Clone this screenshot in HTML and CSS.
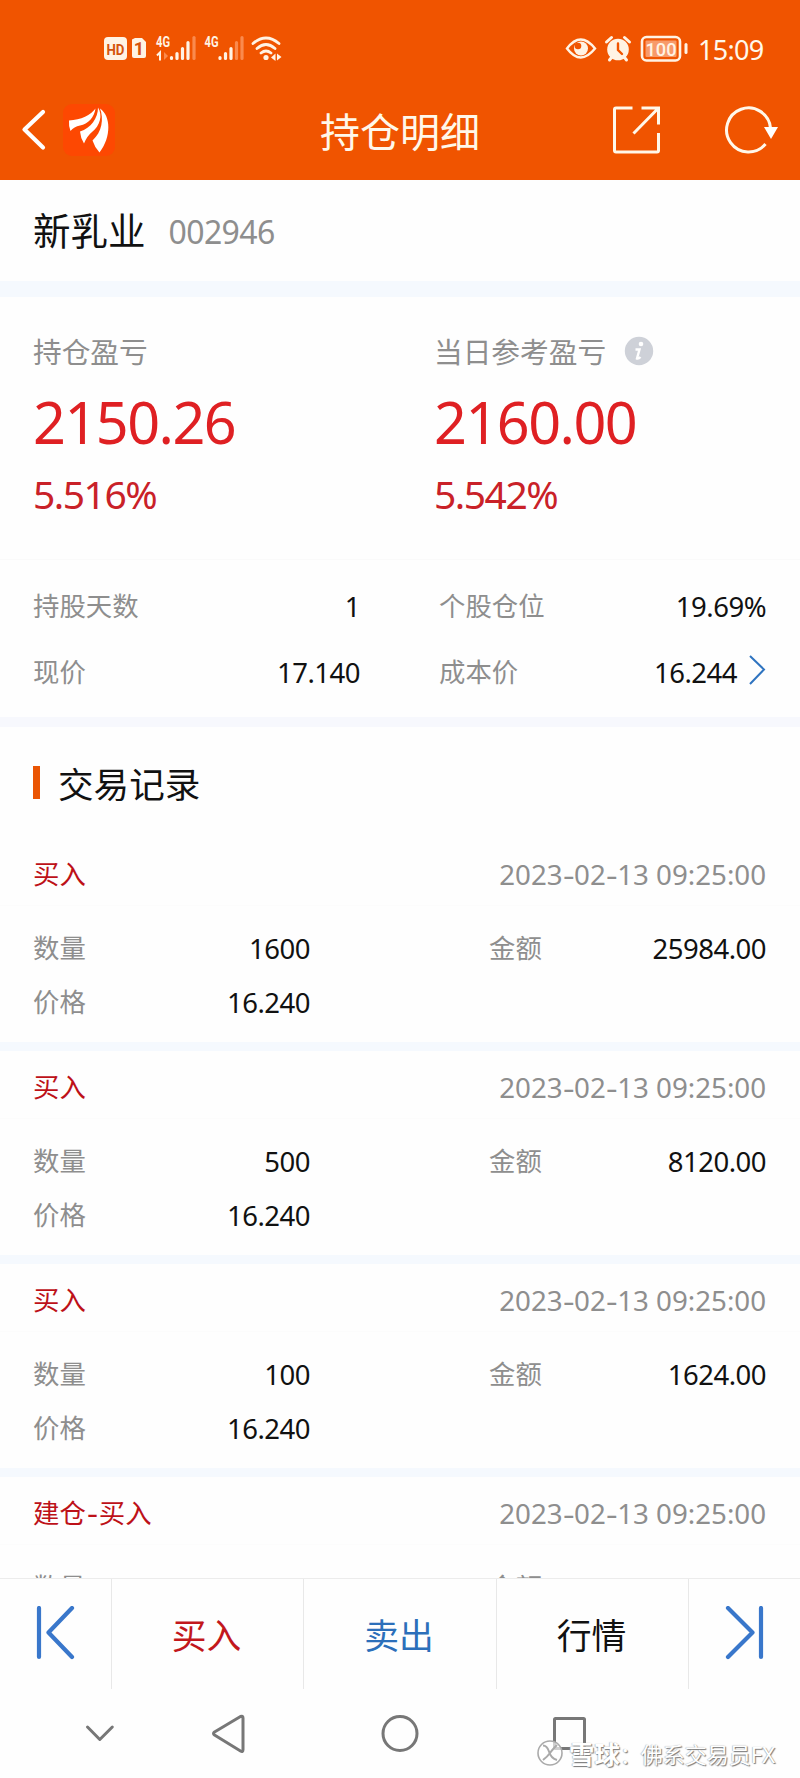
FILE: index.html
```html
<!DOCTYPE html>
<html lang="zh-CN">
<head>
<meta charset="utf-8">
<title>持仓明细</title>
<link rel="stylesheet" href="styles.css">
</head>
<body>
<div class="screen">
  <header class="header">
    <div class="status">
      <svg class="status-left" width="190" height="40" viewBox="100 30 190 40">
        <rect x="104" y="37" width="23" height="23" rx="4" fill="#fff3e4"/>
        <text x="115.500" y="54.500" class="hd" text-anchor="middle" textLength="18" lengthAdjust="spacingAndGlyphs">HD</text>
        <path d="M132 39.500l3-1.500h7l4 4v14q0 2-2 2h-10q-2 0-2-2z" fill="#fff3e4"/>
        <text x="139" y="55" class="sim" text-anchor="middle">1</text>
        <text x="156" y="47" class="net" textLength="14" lengthAdjust="spacingAndGlyphs">4G</text>
        <path d="M157 55.500l3-3v8" fill="none" stroke="#fff3e4" stroke-width="2"/>
        <path d="M164 52v8l4-4z" fill="#fa8a4d"/>
        <path d="M171.500 57.500v1M177 53.500v5M182.500 48.500v10M188 42.500v16" class="bar"/>
        <path d="M194 37.500v21" class="bar faint"/>
        <text x="204.500" y="47" class="net" textLength="14" lengthAdjust="spacingAndGlyphs">4G</text>
        <path d="M220 57.500v1M225.500 53.500v5M231 48.500v10" class="bar"/>
        <path d="M236.500 42.500v16M242 37.500v21" class="bar faint"/>
        <path d="M253 43.500q13-11 26 0M257 48.500q9-8 18 0M261 53q5-4 10 0" fill="none" stroke="#fff3e4" stroke-width="2.800" stroke-linecap="round"/>
        <circle cx="266" cy="57.500" r="2.600" fill="#fff3e4"/>
        <path d="M271 57.500l4.500-4v7.500zM277 53.500v7l4.500-3.500z" fill="#fff3e4"/>
      </svg>
      <svg class="status-right" width="125" height="40" viewBox="564 30 125 40">
        <path d="M567 48.500q13.500-18 28 0q-14.500 18-28 0z" fill="none" stroke="#fff3e4" stroke-width="2.400"/>
        <circle cx="581" cy="48.500" r="7" fill="#fff3e4"/>
        <circle cx="578" cy="46" r="3.300" fill="#f05400"/>
        <circle cx="618" cy="49.500" r="10.800" fill="#fff3e4"/>
        <path d="M606.500 42l5-4.500M629.500 42l-5-4.500M609.500 60l2-2.500M626.500 60l-2-2.500" stroke="#fff3e4" stroke-width="3" stroke-linecap="round"/>
        <path d="M618 43.500v6.500l4 4" fill="none" stroke="#f05400" stroke-width="2.400" stroke-linecap="round"/>
        <rect x="642" y="37" width="38" height="23.500" rx="4.500" fill="none" stroke="#fff3e4" stroke-width="2.600"/>
        <rect x="645.500" y="40.500" width="31" height="16.500" rx="1" fill="#f79a6a"/>
        <text x="661" y="55.500" class="battery" text-anchor="middle" textLength="31" lengthAdjust="spacingAndGlyphs">100</text>
        <path d="M686 44.500v8" stroke="#fff3e4" stroke-width="3" stroke-linecap="round"/>
      </svg>
      <span class="clock">15:09</span>
    </div>
    <div class="titlebar">
      <svg class="back" width="100" height="60" viewBox="20 100 100 60">
        <path d="M43 112L24.500 129.500L43 147.500" fill="none" stroke="#fff" stroke-width="4.200" stroke-linecap="round" stroke-linejoin="round"/>
        <rect x="63" y="104" width="52" height="52" rx="9" fill="#fd4802"/>
        <path d="M69 120.500C81 120 91 115 95.500 108.500C94.500 117 88 124 80 125.500Q74 126.500 70.500 131Q68.500 126 69 120.500z" fill="#fff"/>
        <path d="M98 107.500C103 115 100 126 92 132Q87 136 84 143.500Q80.500 138 80 131.500C91 128 98 118 98 107.500z" fill="#fff"/>
        <path d="M100 108.500C111 116 111.500 137 99.500 152.500Q94.500 147 92.500 140.500C102 132 104 119 100 108.500z" fill="#fff"/>
      </svg>
      <h1 class="title">持仓明细</h1>
      <svg class="actions" width="170" height="60" viewBox="610 100 170 60" fill="none" stroke="#fff8ea" stroke-width="3">
        <path d="M632.500 108H616q-1.500 0-1.500 1.500v41q0 1.500 1.500 1.500h41q1.500 0 1.500-1.500V133M641.500 108h17v16.500M658 108.500L633.500 133.500"/>
        <path d="M765.500 144A22 22 0 1 1 770.500 128"/>
        <path d="M764 127h14l-7 12z" fill="#fff" stroke="none"/>
      </svg>
    </div>
  </header>

  <section class="stock"><span class="name">新乳业</span><span class="code">002946</span></section>

  <section class="profit">
    <div class="profit-cell">
      <div class="label">持仓盈亏</div>
      <div class="amount">2150.26</div>
      <div class="percent">5.516%</div>
    </div>
    <div class="profit-cell">
      <div class="label">当日参考盈亏
        <svg class="info-icon" width="30" height="30" viewBox="0 0 30 30"><circle cx="15" cy="15" r="14.200" fill="#ced1d8"/><circle cx="17" cy="8" r="2.300" fill="#fff"/><path d="M11.500 13.500h4l-2.500 9q1.500.500 3.500-1.500" fill="none" stroke="#fff" stroke-width="2.400"/></svg>
      </div>
      <div class="amount">2160.00</div>
      <div class="percent">5.542%</div>
    </div>
  </section>

  <section class="facts">
    <div class="fact"><span class="key">持股天数</span><span class="val">1</span></div>
    <div class="fact"><span class="key">个股仓位</span><span class="val">19.69%</span></div>
    <div class="fact"><span class="key">现价</span><span class="val">17.140</span></div>
    <div class="fact"><span class="key">成本价</span><span class="val">16.244</span>
      <svg class="chevron" width="18" height="32" viewBox="0 0 18 32"><path d="M2 2L16 15.500L2 30" fill="none" stroke="#2f74c0" stroke-width="2"/></svg>
    </div>
  </section>

  <h2 class="section-title">交易记录</h2>

  <main class="records">
    <article class="record">
      <div class="record-head"><span class="type">买入</span><time>2023<i>-</i>02<i>-</i>13 09:25:00</time></div>
      <div class="record-body">
        <span class="key">数量</span><span class="val">1600</span><span class="key second">金额</span><span class="val">25984.00</span>
        <span class="key">价格</span><span class="val">16.240</span>
      </div>
    </article>
    <article class="record">
      <div class="record-head"><span class="type">买入</span><time>2023<i>-</i>02<i>-</i>13 09:25:00</time></div>
      <div class="record-body">
        <span class="key">数量</span><span class="val">500</span><span class="key second">金额</span><span class="val">8120.00</span>
        <span class="key">价格</span><span class="val">16.240</span>
      </div>
    </article>
    <article class="record">
      <div class="record-head"><span class="type">买入</span><time>2023<i>-</i>02<i>-</i>13 09:25:00</time></div>
      <div class="record-body">
        <span class="key">数量</span><span class="val">100</span><span class="key second">金额</span><span class="val">1624.00</span>
        <span class="key">价格</span><span class="val">16.240</span>
      </div>
    </article>
    <article class="record">
      <div class="record-head"><span class="type">建仓<i>-</i>买入</span><time>2023<i>-</i>02<i>-</i>13 09:25:00</time></div>
      <div class="record-body">
        <span class="key">数量</span><span class="val"></span><span class="key second">金额</span><span class="val"></span>
      </div>
    </article>
  </main>

  <nav class="actionbar">
    <div class="tab"><svg width="40" height="54" viewBox="0 0 40 54" class="step"><path d="M4 2v49M37 2L13.500 26.500L37 51"/></svg></div>
    <div class="tab buy">买入</div>
    <div class="tab sell">卖出</div>
    <div class="tab">行情</div>
    <div class="tab"><svg width="40" height="54" viewBox="0 0 40 54" class="step"><path d="M36 2v49M3 2L27.500 26.500L3 51"/></svg></div>
  </nav>

  <footer class="sysnav">
    <svg width="800" height="89" viewBox="0 1689 800 89" fill="none" stroke="#777" stroke-width="3" stroke-linecap="round" stroke-linejoin="round">
      <path d="M87.500 1727l12.300 12.500l12.500-12.500"/>
      <path d="M243 1718v31.500q0 3-2.500 1.500l-26-16q-2-1.500 0-3l26-15.500q2.500-1 2.500 1.500z"/>
      <circle cx="400" cy="1733.500" r="17"/>
      <rect x="554.500" y="1718.500" width="30" height="30" rx="1"/>
    </svg>
    <div class="watermark">
      <svg width="28" height="28" viewBox="0 0 28 28"><circle cx="14" cy="14" r="12" fill="#fff" fill-opacity=".65" stroke="#aaa" stroke-width="1.600"/><path d="M7 6.500q4 0 6 6q2 7 8 8.500M21 6q-5 5-7 8t-7 7" fill="none" stroke="#aaa" stroke-width="2"/></svg>
      <span class="brand">雪球</span><span class="colon">：</span><span class="author">佛系交易员FX</span>
    </div>
  </footer>
</div>
</body>
</html>
```

FILE: styles.css
```css
* { box-sizing: border-box; }
body {
  margin: 0;
  background: #fefefe;
  color: #111;
  font-family: "Noto Sans", "Noto Sans CJK SC", sans-serif;
}
.screen {
  width: 800px;
  height: 1778px;
  display: flex;
  flex-direction: column;
  overflow: hidden;
  white-space: nowrap;
}
svg { display: block; flex: none; }

.header { height: 180px; background: #f05400; color: #fff8ea; flex: none; }
.status { height: 100px; padding: 30px 36px 0 100px; display: flex; align-items: flex-start; }
.status-right { margin-left: 274px; }
.clock { margin-left: 9px; line-height: 39px; font-size: 27px; letter-spacing: -0.7px; }
.hd { font: 700 15px Roboto, sans-serif; fill: #d4540c; }
.sim { font: 700 18px Roboto, sans-serif; fill: #d4540c; }
.net { font: 700 14px Roboto, sans-serif; fill: #fff3e4; }
.battery { font: 500 19px Roboto, sans-serif; fill: #fff3e4; }
.bar { stroke: #fff3e4; stroke-width: 3.2; stroke-linecap: round; fill: none; }
.bar.faint { stroke: #fa8a4d; }
.titlebar { height: 60px; padding: 0 20px; display: flex; align-items: center; }
.title { margin: 0 0 0 200px; width: 160px; font-size: 40px; font-weight: 400; line-height: 60px; padding-top: 3px; }
.actions { margin-left: 130px; }

.stock { height: 117px; border-bottom: 16px solid #f5f9fe; padding: 0 33px; display: flex; align-items: center; flex: none; }
.name { font-size: 37.5px; line-height: 50px; padding-top: 1px; }
.code { margin-left: 23px; font-size: 32px; line-height: 50px; color: #8e8e8e; letter-spacing: -0.6px; padding-top: 3px; }

.profit { height: 263px; padding: 33px 0 0 33px; display: flex; flex: none; border-bottom: 1px solid #fafafa; }
.profit-cell { width: 401px; flex: none; }
.label { height: 44px; font-size: 28.7px; line-height: 44px; color: #8e8e8e; display: flex; align-items: center; }
.info-icon { margin-left: 18px; margin-top: -3px; }
.amount { margin-top: 13px; height: 70px; font-size: 57.5px; line-height: 70px; color: #df2023; letter-spacing: -1.5px; }
.percent { margin-top: 12px; height: 50px; font-size: 39px; line-height: 50px; color: #c92128; letter-spacing: -1.5px; }

.facts {
  height: 167px;
  border-bottom: 10px solid #f7f8fd;
  padding: 13px 34px 0 33px;
  display: grid;
  grid-template-columns: 327px 327px;
  grid-template-rows: 66px 66px;
  column-gap: 79px;
  flex: none;
}
.fact { display: flex; align-items: center; }
.key { color: #8e8e8e; font-size: 26.4px; padding-bottom: 3px; }
.val { color: #111; font-size: 27.5px; letter-spacing: -0.5px; margin-left: auto; text-align: right; }
.chevron { margin-left: 11px; margin-top: -4px; }

.section-title {
  margin: 0;
  height: 110px;
  padding: 0 33px;
  display: flex;
  align-items: center;
  font-size: 35.6px;
  font-weight: 400;
  flex: none;
}
.section-title::before { content: ""; width: 7px; height: 33px; margin: 1px 18px 0 0; background: #ea5504; }

.records { height: 741px; overflow: hidden; flex: none; }
.record { height: 213px; padding-top: 4px; border-bottom: 9px solid #f5f9fe; }
.record:first-child { height: 214px; padding-top: 5px; }
.record-head { height: 64px; padding: 0 34px 0 33px; display: flex; align-items: center; justify-content: space-between; border-bottom: 1px solid #fcfcfc; }
.type { color: #bd1118; font-size: 26.4px; padding-bottom: 2px; }
time { color: #8e8e8e; font-size: 27.7px; }
i { display: inline-block; width: 13px; font-style: normal; text-align: center; transform: scaleX(1.3); }
time i { width: 11.5px; }
.record-body {
  padding: 15px 34px 0 33px;
  display: grid;
  grid-template-columns: 100px 177px 234px 222px;
  grid-auto-rows: 54px;
  align-items: center;
}
.record-body .val { margin: 0; }
.second { padding-left: 179px; }

.actionbar {
  height: 111px;
  border-top: 1px solid #ececec;
  display: grid;
  grid-template-columns: 112px 192px 193px 192px 111px;
  background: #fefefe;
  flex: none;
}
.tab { display: flex; align-items: center; justify-content: center; font-size: 34.8px; padding: 0 2px 1px 0; border-right: 1px solid #e8e8e8; }
.tab:last-child { border-right: 0; padding-right: 0; }
.buy { color: #c2171c; }
.sell { color: #2c6fba; }
.step { fill: none; stroke: #3977cb; stroke-width: 4.2; stroke-linecap: round; stroke-linejoin: round; margin-top: -1px; }

.sysnav { height: 89px; position: relative; flex: none; }
.watermark { position: absolute; left: 536px; top: 48px; height: 32px; display: flex; align-items: center; color: #fff; text-shadow: 1px 1px 1px #777, -0.5px -0.5px 1px #aaa; }
.brand { margin-left: 5px; font-size: 25.4px; font-weight: 700; }
.colon { width: 21px; font-size: 22px; overflow: hidden; }
.author { font-size: 22px; }
```
